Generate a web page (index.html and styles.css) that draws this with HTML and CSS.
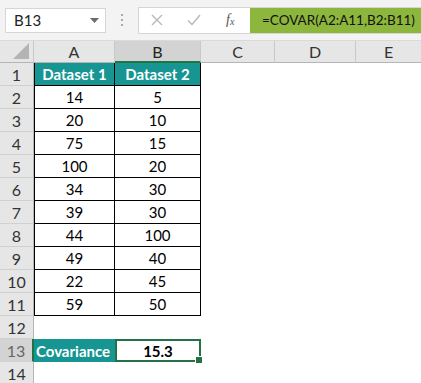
FILE: index.html
```html
<!DOCTYPE html>
<html>

<head>
    <title>COVAR</title>
    <link rel="stylesheet" href="styles.css">
</head>

<body>
    <div class="toolbar">
        <div class="name-box">
            <span>B13</span>
            <svg class="caret" width="9" height="5" viewBox="0 0 9 5"><path d="M0 0h9L4.5 5z" fill="#6b6b6b"/></svg>
        </div>
        <div class="dots"><i></i><i></i><i></i></div>
        <div class="formula-box">
            <div class="icons">
                <svg width="12" height="12" viewBox="0 0 12 12"><path d="M1 1l10 10M11 1L1 11" stroke="#b9b9b9" stroke-width="1.4"/></svg>
                <svg width="14" height="12" viewBox="0 0 14 12"><path d="M1 6.5l4 4L13 1" stroke="#b9b9b9" stroke-width="1.4" fill="none"/></svg>
                <span class="fx">f<sub>x</sub></span>
            </div>
            <div class="formula">=COVAR(A2:A11,B2:B11)</div>
        </div>
    </div>

    <div class="sheet">
        <div class="corner"><svg width="16" height="16" viewBox="0 0 16 16"><path d="M16 0v16H0z" fill="#b4b4b4"/></svg></div>
        <div class="col-head">A</div>
        <div class="col-head selected">B</div>
        <div class="col-head">C</div>
        <div class="col-head">D</div>
        <div class="col-head last">E</div>

        <div class="row-head">1</div>
        <div class="cell t head left">Dataset 1</div>
        <div class="cell t head">Dataset 2</div>
        <div class="cell"></div><div class="cell"></div><div class="cell"></div>

        <div class="row-head">2</div>
        <div class="cell t left">14</div><div class="cell t">5</div>
        <div class="cell"></div><div class="cell"></div><div class="cell"></div>

        <div class="row-head">3</div>
        <div class="cell t left">20</div><div class="cell t">10</div>
        <div class="cell"></div><div class="cell"></div><div class="cell"></div>

        <div class="row-head">4</div>
        <div class="cell t left">75</div><div class="cell t">15</div>
        <div class="cell"></div><div class="cell"></div><div class="cell"></div>

        <div class="row-head">5</div>
        <div class="cell t left">100</div><div class="cell t">20</div>
        <div class="cell"></div><div class="cell"></div><div class="cell"></div>

        <div class="row-head">6</div>
        <div class="cell t left">34</div><div class="cell t">30</div>
        <div class="cell"></div><div class="cell"></div><div class="cell"></div>

        <div class="row-head">7</div>
        <div class="cell t left">39</div><div class="cell t">30</div>
        <div class="cell"></div><div class="cell"></div><div class="cell"></div>

        <div class="row-head">8</div>
        <div class="cell t left">44</div><div class="cell t">100</div>
        <div class="cell"></div><div class="cell"></div><div class="cell"></div>

        <div class="row-head">9</div>
        <div class="cell t left">49</div><div class="cell t">40</div>
        <div class="cell"></div><div class="cell"></div><div class="cell"></div>

        <div class="row-head">10</div>
        <div class="cell t left">22</div><div class="cell t">45</div>
        <div class="cell"></div><div class="cell"></div><div class="cell"></div>

        <div class="row-head">11</div>
        <div class="cell t left">59</div><div class="cell t">50</div>
        <div class="cell"></div><div class="cell"></div><div class="cell"></div>

        <div class="row-head">12</div>
        <div class="cell"></div><div class="cell"></div>
        <div class="cell"></div><div class="cell"></div><div class="cell"></div>

        <div class="row-head selected">13</div>
        <div class="cell label">Covariance</div>
        <div class="cell active">15.3<span class="handle"></span></div>
        <div class="cell"></div><div class="cell"></div><div class="cell"></div>

        <div class="row-head">14</div>
        <div class="cell"></div><div class="cell"></div>
        <div class="cell"></div><div class="cell"></div><div class="cell"></div>
    </div>
</body>

</html>
```

FILE: styles.css
```css
body {
    margin: 0;
    font-family: Lato, "Open Sans", sans-serif;
    font-size: 15px;
    color: #000;
    background: #fff;
    overflow: hidden;
}

/* barra de sus */
.toolbar {
    display: flex;
    align-items: center;
    height: 41px;
    padding-left: 5px;
    box-sizing: border-box;
    background: #f3f3f3;
    border-bottom: 1px solid #dadada;
}

.name-box {
    display: flex;
    align-items: center;
    justify-content: space-between;
    flex-shrink: 0;
    width: 101px;
    height: 25px;
    box-sizing: border-box;
    padding: 0 6px 0 8px;
    background: #fff;
    border: 1px solid #d6d6d6;
    color: #222;
}

.dots {
    display: flex;
    flex-direction: column;
    gap: 3px;
    margin: 0 15px 0 15px;
}

.dots i {
    display: block;
    width: 2px;
    height: 2px;
    background: #a8a8a8;
}

.formula-box {
    display: flex;
    flex: 1;
    min-width: 0;
    height: 25px;
    background: #fff;
    border: 1px solid #d6d6d6;
    border-right: none;
}

.icons {
    display: flex;
    align-items: center;
    flex-shrink: 0;
    gap: 24px;
    width: 111px;
    padding-left: 12px;
    box-sizing: border-box;
}

.fx {
    font-family: "Liberation Serif", serif;
    font-style: italic;
    color: #555;
    font-size: 14px;
    margin-left: 1px;
}

.fx sub {
    font-size: 10px;
    vertical-align: -1px;
}

.formula {
    flex: 1;
    min-width: 0;
    overflow: hidden;
    background: #8db63d;
    color: #111;
    font-size: 13.5px;
    line-height: 25px;
    padding-left: 12px;
    white-space: nowrap;
}

/* foaia */
.sheet {
    display: grid;
    grid-template-columns: 34px 81px 86px 74px 81px 65px;
    grid-template-rows: 22px repeat(14, 23px);
}

.corner {
    display: flex;
    align-items: flex-end;
    justify-content: flex-end;
    padding: 0 4px 3px 0;
    background: #e6e6e6;
    border-right: 1px solid #c9c9c9;
    border-bottom: 1px solid #b5b5b5;
}

.col-head {
    display: flex;
    align-items: center;
    justify-content: center;
    background: #e6e6e6;
    color: #333;
    font-size: 16px;
    border-right: 1px solid #c9c9c9;
    border-bottom: 1px solid #b5b5b5;
}

.col-head.last {
    border-right: none;
}

.col-head.selected {
    background: #d3d3d3;
    color: #222;
    border-bottom: 2px solid #217346;
}

.row-head {
    display: flex;
    align-items: center;
    justify-content: center;
    background: #e6e6e6;
    color: #333;
    font-size: 16px;
    border-right: 1px solid #b5b5b5;
    border-bottom: 1px solid #d0d0d0;
}

.row-head.selected {
    background: #d3d3d3;
    color: #666;
    border-right: 2px solid #217346;
}

.cell {
    display: flex;
    align-items: center;
    justify-content: center;
    box-sizing: border-box;
    font-size: 15px;
}

.t {
    border-right: 1px solid #000;
    border-bottom: 1px solid #000;
}

.t.left {
    border-left: 1px solid #000;
}

.head {
    background: #169592;
    color: #fff;
    font-weight: bold;
}

.label {
    justify-content: flex-start;
    padding-left: 2px;
    background: #169592;
    color: #fff;
    font-weight: bold;
}

.active {
    position: relative;
    font-weight: bold;
    border: 2px solid #217346;
}

.handle {
    position: absolute;
    right: -4px;
    bottom: -4px;
    width: 6px;
    height: 6px;
    background: #217346;
    border: 1px solid #fff;
}
```
